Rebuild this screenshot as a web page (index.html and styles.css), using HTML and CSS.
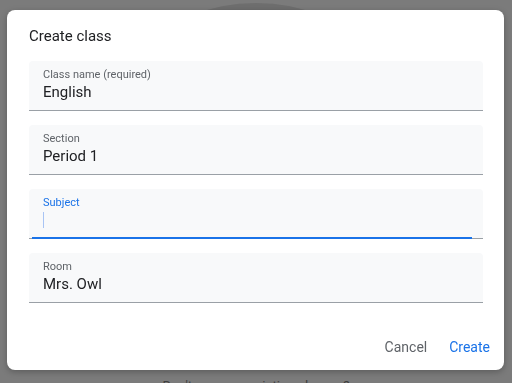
FILE: index.html
```html
<!DOCTYPE html>
<html lang="en">
<head>
<meta charset="utf-8">
<title>Create class</title>
<link rel="stylesheet" href="styles.css">
</head>
<body>
<main class="page">
  <div class="illustration"></div>
  <p class="hint">Don't see your existing classes?</p>
</main>

<div class="dialog" role="dialog" aria-label="Create class">
  <div class="dialog-body">
    <h2 class="title">Create class</h2>
    <div class="fields">
      <div class="field">
        <div class="label">Class name (required)</div>
        <div class="value">English</div>
      </div>
      <div class="field">
        <div class="label">Section</div>
        <div class="value">Period 1</div>
      </div>
      <div class="field focused">
        <div class="label">Subject</div>
        <div class="value"><span class="caret"></span></div>
      </div>
      <div class="field">
        <div class="label">Room</div>
        <div class="value">Mrs. Owl</div>
      </div>
    </div>
  </div>
  <div class="actions">
    <button class="btn btn-cancel">Cancel</button>
    <button class="btn btn-create">Create</button>
  </div>
</div>
</body>
</html>
```
FILE: styles.css
```css
html, body {
  margin: 0;
  padding: 0;
  height: 100%;
  overflow: hidden;
}
body {
  background: #7b7b7b;
  font-family: Roboto, "Liberation Sans", Arial, sans-serif;
}
.page {
  display: flex;
  flex-direction: column;
  align-items: center;
  padding-top: 3px;
}
.illustration {
  width: 350px;
  height: 350px;
  border-radius: 50%;
  background: #6e6e6e;
  flex: none;
}
.hint {
  margin: 23px 0 0 0;
  font-size: 13.3px;
  line-height: 20px;
  color: #3e3e3e;
}
.dialog {
  position: fixed;
  left: 7px;
  top: 10px;
  width: 497px;
  height: 360px;
  box-sizing: border-box;
  background: #fff;
  border-radius: 8px;
  box-shadow: 0 2px 6px rgba(0,0,0,0.25);
  display: flex;
  flex-direction: column;
}
.dialog-body {
  padding: 16px 21px 0 22px;
}
.title {
  margin: 0;
  font-size: 15px;
  line-height: 20px;
  font-weight: 400;
  color: #202124;
}
.fields {
  margin-top: 15px;
  display: flex;
  flex-direction: column;
  gap: 14px;
}
.field {
  position: relative;
  height: 50px;
  box-sizing: border-box;
  background: #f8f9fa;
  border-radius: 4px 4px 0 0;
  border-bottom: 1px solid #9aa0a6;
  padding: 7px 14px 0 14px;
}
.label {
  font-size: 11px;
  line-height: 14px;
  color: #5f6368;
}
.value {
  font-size: 15px;
  line-height: 20px;
  color: #202124;
  height: 20px;
}
.focused .label {
  color: #1a73e8;
}
.focused::after {
  content: "";
  position: absolute;
  left: 3px;
  right: 11px;
  bottom: -1px;
  height: 2px;
  background: #1a73e8;
}
.caret {
  display: inline-block;
  width: 0;
  height: 16px;
  margin-top: 2px;
  border-left: 1px solid #a8c4f4;
  vertical-align: top;
}
.actions {
  margin-top: auto;
  display: flex;
  justify-content: flex-end;
  gap: 6px;
  padding: 0 6px 5px 0;
}
.btn {
  border: 0;
  background: transparent;
  font-family: Roboto, "Liberation Sans", Arial, sans-serif;
  font-size: 14px;
  line-height: 36px;
  height: 36px;
  padding: 0 8px;
  cursor: pointer;
}
.btn-cancel {
  color: #5f6368;
}
.btn-create {
  color: #1a73e8;
}
```
